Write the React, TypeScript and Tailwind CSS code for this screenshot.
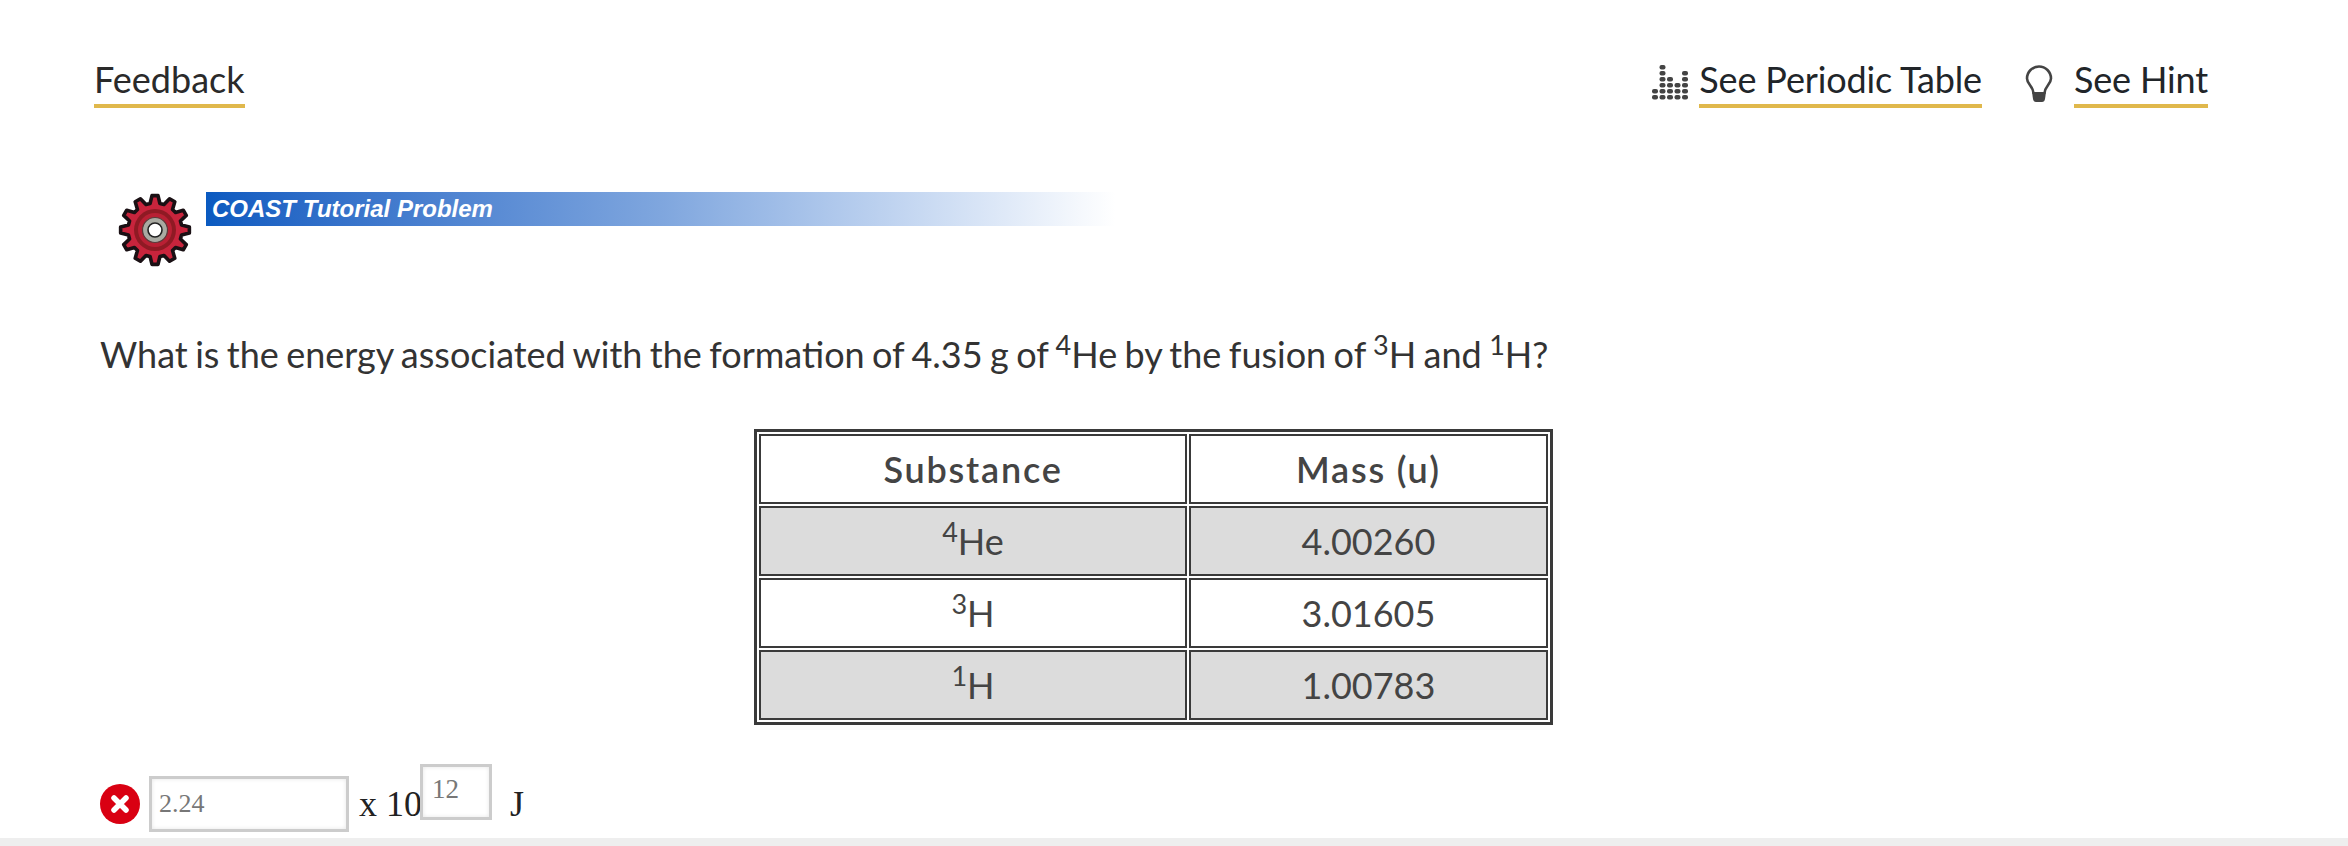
const rows = [
  ["4", "He", "4.00260", true],
  ["3", "H", "3.01605", false],
  ["1", "H", "1.00783", true],
] as const;

function Dots() {
  const cols = [2, 6, 4, 3, 5];
  return (
    <svg width="36" height="36" viewBox="0 0 36 36" className="shrink-0 mr-[11px]">
      {cols.flatMap((n, c) =>
        Array.from({ length: n }, (_, r) => (
          <rect key={`${c}-${r}`} x={c * 7.5} y={31 - r * 6} width="6" height="4.4" rx="2" fill="#444" />
        ))
      )}
    </svg>
  );
}

function Bulb() {
  return (
    <svg width="28" height="38" viewBox="0 0 28 38" className="shrink-0" fill="none">
      <path d="M8.5 28 C8 21 2 19 2 13.5 A12 12 0 0 1 26 13.5 C26 19 20 21 19.5 28" stroke="#444" strokeWidth="2.6" strokeLinecap="round" />
      <path d="M7 27 H21 L20 34 Q19.5 37 17 37 H11 Q8.500 37 8 34 Z" fill="#444" />
    </svg>
  );
}

function gearPath() {
  const pts: string[] = [];
  const n = 12;
  for (let i = 0; i < n; i++) {
    const a = (i * 360) / n;
    const p = (r: number, d: number) => {
      const t = ((a + d - 90) * Math.PI) / 180;
      return `${(r * Math.cos(t)).toFixed(2)} ${(r * Math.sin(t)).toFixed(2)}`;
    };
    pts.push(p(27, -10.5), p(34.5, -5), p(34.5, 5), p(27, 10.5));
  }
  return `M${pts.join(" L")} Z`;
}

function Gear() {
  return (
    <svg width="80" height="80" viewBox="-40 -40 80 80" className="shrink-0">
      <path d={gearPath()} fill="#c8243c" stroke="#1a1014" strokeWidth="3.6" strokeLinejoin="round" />
      <circle r="21" fill="#8f1a24" />
      <circle r="17" fill="#b92034" />
      <circle r="12.5" fill="#a9aaa2" stroke="#5a3a3a" strokeWidth="1.2" />
      <circle r="7" fill="#fff" stroke="#222" strokeWidth="1.6" />
    </svg>
  );
}

function Link({ children }: { children: string }) {
  return <span className="border-b-4 border-[#e0b84c] h-[48px] leading-[39px] text-[#212529] tracking-[-0.15px]">{children}</span>;
}

export default function App() {
  return (
    <div className="h-[846px] w-[2348px] bg-white flex flex-col overflow-hidden font-['Lato',sans-serif] text-[#333]">
      <header className="h-[108px] pt-[60px] pl-[94px] pr-[140px] flex justify-between items-start text-[36px]">
        <span className="border-b-4 border-[#e0b84c] h-[48px] leading-[39px] text-[#2a2a2a]">Feedback</span>
        <div className="flex items-start">
          <div className="flex items-center h-[44px]">
            <Dots />
          </div>
          <Link>See Periodic Table</Link>
          <div className="flex items-center h-[48px] ml-[43px] mr-[21px]">
            <Bulb />
          </div>
          <Link>See Hint</Link>
        </div>
      </header>

      <div className="flex items-start pl-[115px] mt-[82px]">
        <Gear />
        <div className="ml-[11px] mt-[2px] w-[909px] h-[34px] pl-[6px] flex items-center bg-gradient-to-r from-[#0a5ac0] via-[#7fa6de] to-white text-white italic font-bold text-[24px] font-['Liberation_Sans',sans-serif]">
          COAST Tutorial Problem
        </div>
      </div>

      <p className="mt-[59px] ml-[100px] text-[36px] leading-[50px] text-[#333] [word-spacing:-1.8px]">
        What is the energy associated with the formation of 4.35 g of <sup className="text-[27px]">4</sup>He by the fusion of <sup className="text-[27px]">3</sup>H and <sup className="text-[27px]">1</sup>H?
      </p>

      <table className="mt-[50px] ml-[754px] w-[799px] table-fixed border-separate border-spacing-[2px] border-[3px] border-[#3a3a3a] text-[36px] text-center text-[#444]">
        <colgroup>
          <col className="w-[428px]" />
          <col />
        </colgroup>
        <thead>
          <tr className="h-[70px]">
            <th className="border-2 border-[#3a3a3a] font-semibold tracking-[1.8px] text-[#444]">Substance</th>
            <th className="border-2 border-[#3a3a3a] font-semibold tracking-[1.8px] text-[#444]">Mass (u)</th>
          </tr>
        </thead>
        <tbody>
          {rows.map(([iso, el, mass, shaded]) => (
            <tr key={mass} className={shaded ? "h-[70px] bg-[#dcdcdc]" : "h-[70px]"}>
              <td className="border-2 border-[#3a3a3a]"><sup className="text-[27px]">{iso}</sup>{el}</td>
              <td className="border-2 border-[#3a3a3a]">{mass}</td>
            </tr>
          ))}
        </tbody>
      </table>

      <div className="flex items-center mt-[51px] ml-[100px] font-['Liberation_Serif',serif] text-[36px] text-[#222]">
        <span className="w-[40px] h-[40px] rounded-full bg-[#d90012] flex items-center justify-center shrink-0">
          <svg width="20" height="20" viewBox="0 0 20 20"><path d="M4 4 L16 16 M16 4 L4 16" stroke="#fff" strokeWidth="5.5" strokeLinecap="round" /></svg>
        </span>
        <input readOnly value="2.24" className="ml-[9px] w-[200px] h-[56px] border-[3px] border-[#ccc] bg-white px-[7px] text-[26px] text-[#777] outline-none shadow-[inset_0_0_4px_rgba(0,0,0,0.1)]" />
        <span className="ml-[10px]">x 10</span>
        <input readOnly value="12" className="-ml-[2px] -translate-y-[12px] w-[72px] h-[56px] border-[3px] border-[#ccc] bg-white pl-[9px] pb-[6px] text-[27px] text-[#777] outline-none shadow-[inset_0_0_4px_rgba(0,0,0,0.1)]" />
        <span className="ml-[18px]">J</span>
      </div>

      <div className="mt-auto h-[8px] bg-[#eeeeee]" />
    </div>
  );
}
